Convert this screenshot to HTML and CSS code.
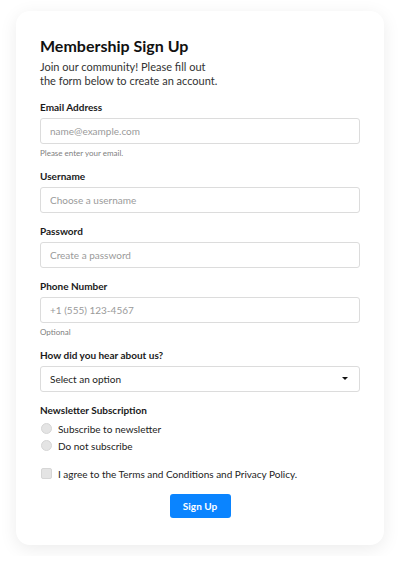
FILE: index.html
```html
<!DOCTYPE html>
<html>
  <head>
    <title>Membership Sign Up</title>
    <link rel="stylesheet" href="styles.css">
  </head>
  <body>
    <main class="page">
      <form class="card">
        <h1>Membership Sign Up</h1>
        <p class="intro">Join our community! Please fill out the form below to create an account.</p>

        <div class="form-group">
          <label class="field-label" for="email">Email Address</label>
          <input type="email" id="email" placeholder="name@example.com" />
          <small class="hint">Please enter your email.</small>
        </div>

        <div class="form-group">
          <label class="field-label" for="username">Username</label>
          <input type="text" id="username" placeholder="Choose a username" />
        </div>

        <div class="form-group">
          <label class="field-label" for="password">Password</label>
          <input type="password" id="password" placeholder="Create a password" />
        </div>

        <div class="form-group">
          <label class="field-label" for="phone">Phone Number</label>
          <input type="tel" id="phone" placeholder="+1 (555) 123-4567" />
          <small class="hint">Optional</small>
        </div>

        <div class="form-group">
          <label class="field-label" for="source">How did you hear about us?</label>
          <div class="select-wrap">
            <select id="source">
              <option>Select an option</option>
              <option>Friend</option>
              <option>Social media</option>
              <option>Search engine</option>
            </select>
          </div>
        </div>

        <div class="form-group">
          <span class="field-label group-title">Newsletter Subscription</span>
          <label class="choice"><input type="radio" name="newsletter" /> Subscribe to newsletter</label>
          <label class="choice"><input type="radio" name="newsletter" /> Do not subscribe</label>
        </div>

        <div class="form-group">
          <label class="choice"><input type="checkbox" /> I agree to the Terms and Conditions and Privacy Policy.</label>
        </div>

        <div class="actions">
          <button type="submit">Sign Up</button>
        </div>
      </form>
    </main>
  </body>
</html>
```

FILE: styles.css
```css
/* reset */
* {
  box-sizing: border-box;
  margin: 0;
  padding: 0;
}

body {
  background-color: #fff;
  font-family: Lato, "Noto Sans", sans-serif;
  color: #222;
}

.page {
  padding: 11px 16px;
}

/* card */
.card {
  background-color: #fff;
  border-radius: 14px;
  box-shadow: 0 4px 18px rgba(0, 0, 0, 0.08);
  padding: 24px 24px 27px;
}

h1 {
  font-size: 16px;
  line-height: 22px;
  font-weight: bold;
  color: #111;
}

.intro {
  max-width: 180px;
  margin-top: 3px;
  margin-bottom: 12px;
  font-size: 11px;
  line-height: 14px;
  color: #333;
}

.form-group {
  display: flex;
  flex-direction: column;
  margin-bottom: 11px;
}

.field-label {
  font-size: 10px;
  line-height: 14px;
  font-weight: bold;
  color: #1a1a1a;
  margin-bottom: 4px;
}

input[type="email"],
input[type="text"],
input[type="password"],
input[type="tel"],
select {
  width: 100%;
  height: 26px;
  padding: 0 9px;
  border: 1px solid #dcdcdc;
  border-radius: 3px;
  background-color: #fff;
  font-family: inherit;
  font-size: 10px;
  color: #222;
}

input::placeholder {
  color: #9a9a9a;
}

.hint {
  margin-top: 4px;
  font-size: 8px;
  line-height: 10px;
  color: #808080;
}

/* select with its own caret */
.select-wrap {
  position: relative;
}

select {
  appearance: none;
  -webkit-appearance: none;
  color: #222;
}

.select-wrap::after {
  content: "";
  position: absolute;
  right: 12px;
  top: 11px;
  border-left: 3px solid transparent;
  border-right: 3px solid transparent;
  border-top: 3.5px solid #111;
}

/* radio / checkbox rows */
.group-title {
  margin-bottom: 3px;
}

.choice {
  display: flex;
  align-items: center;
  gap: 6px;
  height: 17px;
  font-size: 10px;
  color: #222;
}

.choice input {
  appearance: none;
  -webkit-appearance: none;
  width: 11px;
  height: 11px;
  margin-left: 1px;
  background-color: #e4e4e4;
  border: 1px solid #d6d6d6;
  border-radius: 50%;
}

.choice input[type="checkbox"] {
  border-radius: 2px;
}

.actions {
  display: flex;
  justify-content: center;
  margin-top: 12px;
}

button {
  width: 61px;
  height: 24px;
  border: none;
  border-radius: 3px;
  background-color: #0a84ff;
  color: #fff;
  font-family: inherit;
  font-size: 10px;
  font-weight: bold;
  cursor: pointer;
}
```
